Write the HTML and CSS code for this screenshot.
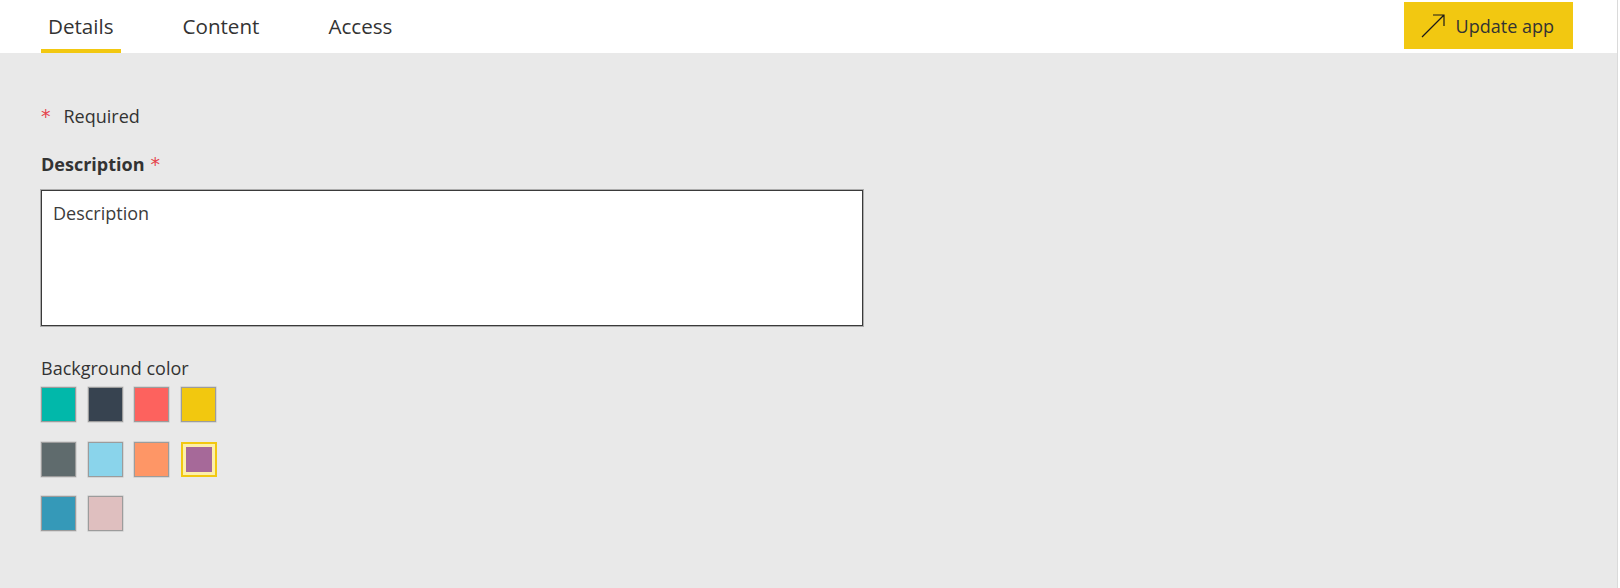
FILE: index.html
```html
<!DOCTYPE html>
<html lang="en">
<head>
<meta charset="utf-8">
<title>Update app</title>
<link rel="stylesheet" href="styles.css">
</head>
<body>
<div class="page">
  <div class="main">
    <header class="topbar">
      <nav class="tabs">
        <a class="tab active">Details</a>
        <a class="tab">Content</a>
        <a class="tab">Access</a>
      </nav>
      <button class="update-btn" type="button">
        <svg class="update-icon" width="24" height="24" viewBox="0 0 24 24" aria-hidden="true">
          <path d="M1 23 L23 1 M12 1 H23 V12" fill="none" stroke="#1a1a1a" stroke-width="1.2"/>
        </svg>
        <span>Update app</span>
      </button>
    </header>

    <section class="content">
      <div class="required-note"><span class="req">*</span><span class="required-text">Required</span></div>

      <label class="field-label" for="desc">Description<span class="req">*</span></label>
      <textarea id="desc" class="desc-input" placeholder="Description"></textarea>

      <div class="bg-label">Background color</div>
      <div class="swatches">
        <div class="swatch" style="background:#01b8aa"></div>
        <div class="swatch" style="background:#374350"></div>
        <div class="swatch" style="background:#fd625e"></div>
        <div class="swatch" style="background:#f2c80f"></div>
        <div class="swatch" style="background:#5f6b6d"></div>
        <div class="swatch" style="background:#8ad4eb"></div>
        <div class="swatch" style="background:#fe9666"></div>
        <div class="swatch selected" style="background:#a66999"></div>
        <div class="swatch" style="background:#3599b8"></div>
        <div class="swatch" style="background:#dfbfbf"></div>
      </div>
    </section>
  </div>
  <div class="scroll-edge"></div>
</div>
</body>
</html>
```

FILE: styles.css
```css
* { box-sizing: border-box; }

html, body {
  margin: 0;
  padding: 0;
  background: #e9e9e9;
}

body {
  font-family: "Segoe UI", "Open Sans", "Noto Sans", sans-serif;
  color: #333333;
}

.page {
  display: flex;
  width: 1620px;
  height: 588px;
  overflow: hidden;
}

.main {
  flex: 1;
  background: #e9e9e9;
  display: flex;
  flex-direction: column;
}

.scroll-edge {
  width: 3px;
  background: #ffffff;
  border-left: 1px solid #dadada;
}

/* ---------- top bar ---------- */
.topbar {
  height: 53px;
  background: #ffffff;
  display: flex;
  justify-content: space-between;
  align-items: flex-start;
  padding: 0 44px 0 41px;
}

.tabs {
  display: flex;
  gap: 55px;
  height: 53px;
}

.tab {
  display: block;
  height: 53px;
  padding: 13px 7px 0;
  font-size: 20.6px;
  line-height: 27px;
  color: #333333;
  border-bottom: 4px solid transparent;
  cursor: pointer;
}

.tab.active {
  border-bottom-color: #f2c811;
}

.update-btn {
  margin-top: 2px;
  height: 47px;
  display: flex;
  align-items: center;
  gap: 11px;
  padding: 0 19px 0 17px;
  background: #f2c811;
  border: none;
  font-family: inherit;
  font-size: 18px;
  color: #333333;
  cursor: pointer;
}

.update-icon {
  display: block;
  flex: none;
}

/* ---------- content ---------- */
.content {
  padding: 0 41px;
}

.required-note {
  margin-top: 51px;
  font-size: 18px;
  line-height: 24px;
}

.req {
  font-family: "DejaVu Sans", sans-serif;
  color: #e5444c;
  font-weight: normal;
  font-size: 19px;
  line-height: 0;
}

.required-text {
  margin-left: 13px;
}

.field-label {
  display: block;
  margin-top: 24px;
  font-size: 18px;
  line-height: 24px;
  font-weight: 700;
}

.field-label .req {
  margin-left: 6px;
}

.desc-input {
  display: block;
  margin-top: 14px;
  width: 822px;
  height: 136px;
  padding: 10px 11px;
  border: 1px solid #3a3a3a;
  box-shadow: 0 0 0 1px rgba(60, 60, 60, 0.35);
  border-radius: 0;
  background: #ffffff;
  font-family: inherit;
  font-size: 18px;
  line-height: 24px;
  color: #333333;
  resize: none;
  outline: none;
}

.desc-input::placeholder {
  color: #3c3c3c;
  opacity: 1;
}

.bg-label {
  margin-top: 30px;
  font-size: 18px;
  line-height: 24px;
}

.swatches {
  margin-top: 7px;
  display: grid;
  grid-template-columns: repeat(4, 35px);
  grid-auto-rows: 35px;
  column-gap: 11.5px;
  row-gap: 19.5px;
}

.swatch {
  width: 35px;
  height: 35px;
  border: 1px solid #9c9c9c;
  box-shadow: 0 0 0 0.5px rgba(156, 156, 156, 0.5);
  cursor: pointer;
}

.swatch.selected {
  width: 36px;
  border: 2px solid #f2c811;
  box-shadow: inset 0 0 0 3px #fcf0a9;
}
```
